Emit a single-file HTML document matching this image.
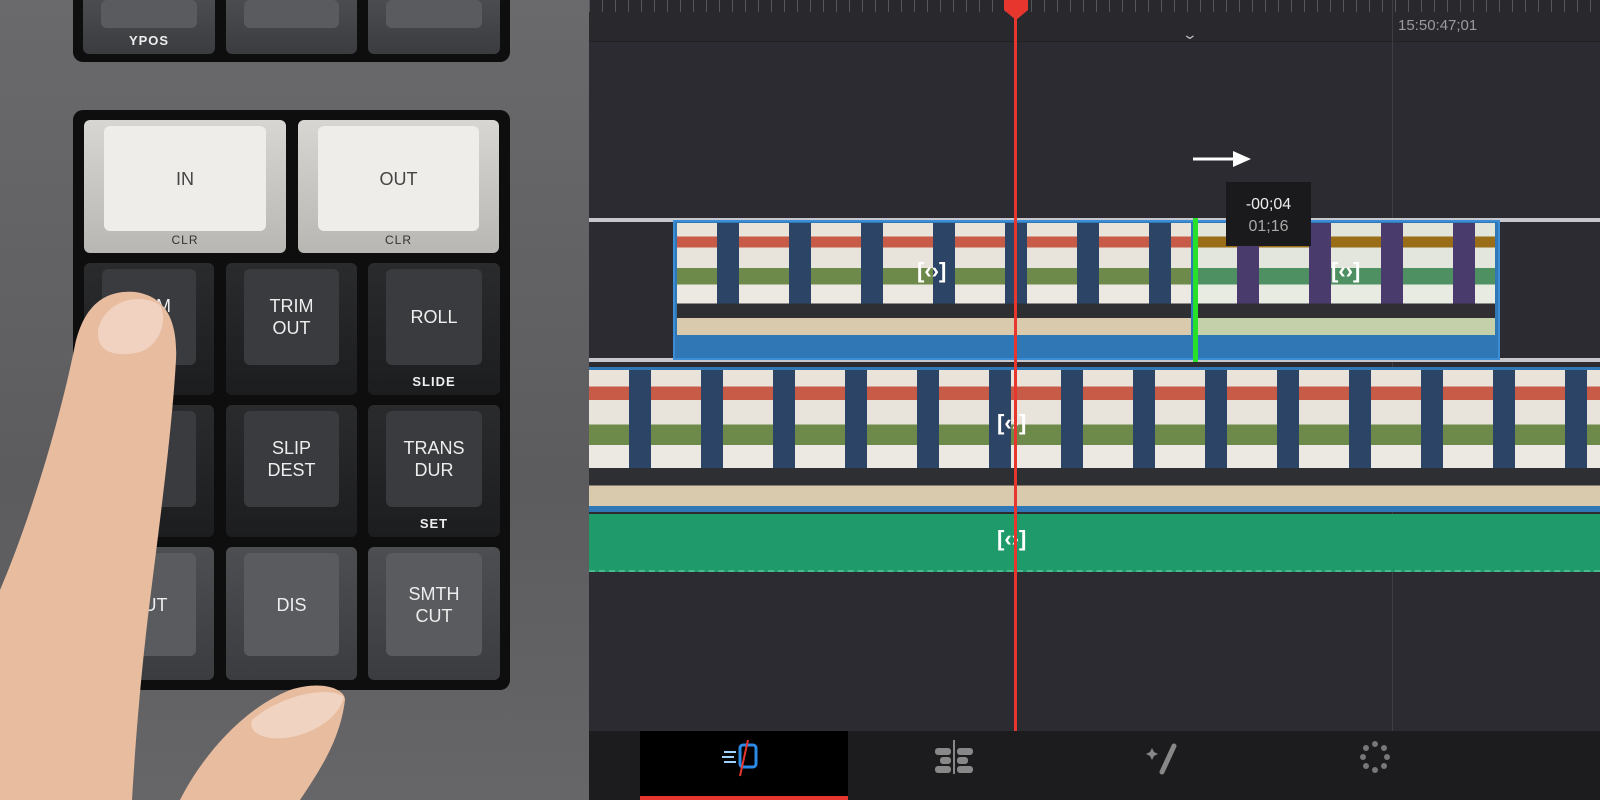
<!DOCTYPE html>
<html><head><meta charset="utf-8"><style>
*{margin:0;padding:0;box-sizing:border-box}
body{width:1600px;height:800px;overflow:hidden;background:#2c2c32;position:relative;font-family:"Liberation Sans",sans-serif}
.abs{position:absolute}
#left{left:0;top:0;width:589px;height:800px;background:linear-gradient(180deg,#6a6a6c,#5c5c5e 60%,#666668)}
.well{position:absolute;background:#0e0e0f;border-radius:10px}
.key{position:absolute;border-radius:6px;background:linear-gradient(180deg,#2a2b2d,#1c1d1f);}
.key .top{position:absolute;left:18px;right:18px;top:6px;bottom:30px;border-radius:6px;background:#3a3b3e;color:#eee;font-size:18px;text-align:center;display:flex;align-items:center;justify-content:center;line-height:22px}
.key .sub{position:absolute;bottom:6px;width:100%;text-align:center;color:#eee;font-size:13px;font-weight:bold;letter-spacing:1px}
.gk{background:linear-gradient(180deg,#4c4e51,#3a3c3f)}
.gk .top{background:#595b5e}
.wk{background:linear-gradient(180deg,#d8d6d2,#b9b7b3)}
.wk .top{background:#efedea;color:#444;bottom:22px;left:20px;right:20px}
.wk .sub{color:#333;font-weight:normal;font-size:12px}
#tl{left:589px;top:0;width:1011px;height:731px;background:#2b2b31}
.thumb{position:absolute;background:
 linear-gradient(180deg,transparent 0 72%,#2e2f33 72% 85%,#d9c9ad 85%),
 repeating-linear-gradient(90deg,transparent 0 40px,#2c4466 40px 62px,transparent 62px 72px),
 linear-gradient(180deg,#e9e3da 0 12%,#c85a48 12% 22%,#e8e4dc 22% 40%,#6d8a4a 40% 55%,#ece9e2 55%);}
</style></head><body>
<div id="left" class="abs">
 <div class="well" style="left:73px;top:-10px;width:437px;height:72px"></div>
 <div class="key gk" style="left:83px;top:-6px;width:132px;height:60px"><div class="top" style="bottom:26px"></div><div class="sub" style="font-weight:bold">YPOS</div></div>
 <div class="key gk" style="left:226px;top:-6px;width:131px;height:60px"><div class="top" style="bottom:26px"></div></div>
 <div class="key gk" style="left:368px;top:-6px;width:132px;height:60px"><div class="top" style="bottom:26px"></div></div>
 <div class="well" style="left:73px;top:110px;width:437px;height:580px"></div>
 <div class="key wk" style="left:84px;top:120px;width:202px;height:133px"><div class="top">IN</div><div class="sub">CLR</div></div>
 <div class="key wk" style="left:298px;top:120px;width:201px;height:133px"><div class="top">OUT</div><div class="sub">CLR</div></div>
 <div class="key" style="left:84px;top:263px;width:130px;height:132px"><div class="top">TRIM<br>IN</div></div>
 <div class="key" style="left:226px;top:263px;width:131px;height:132px"><div class="top">TRIM<br>OUT</div></div>
 <div class="key" style="left:368px;top:263px;width:132px;height:132px"><div class="top">ROLL</div><div class="sub">SLIDE</div></div>
 <div class="key" style="left:84px;top:405px;width:130px;height:132px"><div class="top"></div></div>
 <div class="key" style="left:226px;top:405px;width:131px;height:132px"><div class="top">SLIP<br>DEST</div></div>
 <div class="key" style="left:368px;top:405px;width:132px;height:132px"><div class="top">TRANS<br>DUR</div><div class="sub">SET</div></div>
 <div class="key gk" style="left:84px;top:547px;width:130px;height:133px"><div class="top" style="bottom:24px">CUT</div></div>
 <div class="key gk" style="left:226px;top:547px;width:131px;height:133px"><div class="top" style="bottom:24px">DIS</div></div>
 <div class="key gk" style="left:368px;top:547px;width:132px;height:133px"><div class="top" style="bottom:24px">SMTH<br>CUT</div></div>
 <svg class="abs" style="left:0;top:0" width="589" height="800">
  <path d="M0,590 C30,520 60,420 75,345 C85,300 110,290 135,292 C165,296 178,320 176,360 C172,430 160,520 150,600 C140,680 135,750 132,800 L0,800 Z" fill="#e8bc9f"/>
  <path d="M98,330 C105,300 140,292 160,305 C168,320 160,345 140,352 C115,358 96,352 98,330Z" fill="#f1d2c0"/>
  <path d="M180,800 C200,760 240,710 290,690 C320,680 345,688 345,700 C340,740 320,770 300,800 Z" fill="#e8bc9f"/>
  <path d="M252,720 C280,695 330,685 344,697 C338,720 310,735 285,738 C262,740 248,732 252,720Z" fill="#f0d3c0"/>
 </svg>
</div>
<div id="tl" class="abs">
 <div class="abs" style="left:0;top:0;width:1011px;height:42px;background:#28282d;border-bottom:1px solid #222;background-image:repeating-linear-gradient(90deg,#55555c 0 1px,transparent 1px 13px);background-size:100% 12px;background-repeat:no-repeat"></div>
 <div class="abs" style="left:803px;top:0;width:1px;height:731px;background:#3e3e44"></div>
 <div class="abs" style="left:809px;top:17px;color:#9a9aa0;font-size:15px">15:50:47;01</div>
 <div class="abs" style="left:595px;top:26px;color:#bbb;font-size:14px;transform:scaleX(1.4)">&#8964;</div>
 <div class="abs" style="left:0;top:218px;width:1011px;height:4px;background:#c8c8cc"></div>
 <div class="abs" style="left:0;top:358px;width:1011px;height:4px;background:#c8c8cc"></div>
 <div class="abs" style="left:84px;top:220px;width:827px;height:140px;background:#2f77b5;border:2px solid #3b8ed6"></div>
 <div class="thumb" style="left:88px;top:223px;width:514px;height:112px"></div>
 <div class="thumb" style="left:608px;top:223px;width:298px;height:112px;filter:hue-rotate(40deg)"></div>
 <div class="abs" style="left:604px;top:218px;width:5px;height:144px;background:#27e02a"></div>
 <div class="abs" style="left:0;top:367px;width:1011px;height:145px;background:#2f77b5"></div>
 <div class="thumb" style="left:0;top:370px;width:1011px;height:136px"></div>
 <div class="abs" style="left:0;top:514px;width:1011px;height:58px;background:#1f9a6a;border-bottom:2px dashed #4ab88a"></div>
 <div class="abs" style="left:637px;top:182px;width:85px;height:64px;background:#1a1a1c;color:#eee;font-size:16px;text-align:center;padding-top:12px;line-height:22px">-00;04<br><span style="color:#aaa">01;16</span></div>
 <svg class="abs" style="left:600px;top:148px" width="70" height="24"><path d="M4,11h42" stroke="#fff" stroke-width="3"/><path d="M44,3l18,8-18,8z" fill="#fff"/></svg>
 <div class="abs" style="left:328px;top:258px;color:#fff;font-size:22px;font-weight:bold">[‹›]</div>
 <div class="abs" style="left:742px;top:258px;color:#fff;font-size:22px;font-weight:bold">[‹›]</div>
 <div class="abs" style="left:408px;top:410px;color:#fff;font-size:22px;font-weight:bold">[‹›]</div>
 <div class="abs" style="left:408px;top:526px;color:#fff;font-size:22px;font-weight:bold">[‹›]</div>
 <div class="abs" style="left:425px;top:0;width:3px;height:731px;background:#e6362e"></div>
 <svg class="abs" style="left:414px;top:0" width="26" height="22"><path d="M1,0h24v10l-12,10-12-10z" fill="#e6362e"/></svg>
</div>
<div class="abs" style="left:589px;top:731px;width:1011px;height:69px;background:#1c1c1e"></div>
<div class="abs" style="left:640px;top:731px;width:208px;height:69px;background:#000;border-bottom:4px solid #e6362e"></div>
<svg class="abs" style="left:718px;top:740px" width="50" height="40"><rect x="22" y="5" width="16" height="22" rx="3" fill="none" stroke="#2a8ce6" stroke-width="3"/><path d="M6,12h12M4,17h12M6,22h12" stroke="#9fd0ff" stroke-width="2"/><path d="M30,0L22,36" stroke="#e6362e" stroke-width="2"/></svg>
<svg class="abs" style="left:932px;top:740px" width="44" height="36"><path d="M22,0v34" stroke="#888" stroke-width="2"/><rect x="3" y="8" width="16" height="7" rx="3" fill="#888"/><rect x="25" y="8" width="16" height="7" rx="3" fill="#888"/><rect x="8" y="17" width="11" height="7" rx="3" fill="#888"/><rect x="25" y="17" width="11" height="7" rx="3" fill="#888"/><rect x="3" y="26" width="16" height="7" rx="3" fill="#888"/><rect x="25" y="26" width="16" height="7" rx="3" fill="#888"/></svg>
<svg class="abs" style="left:1146px;top:738px" width="40" height="40"><path d="M28,8L16,34" stroke="#888" stroke-width="5" stroke-linecap="round"/><path d="M6,10l2,4 4,2-4,2-2,4-2-4-4-2 4-2z" fill="#888"/></svg>
<svg class="abs" style="left:1358px;top:740px" width="34" height="34"><g fill="#777"><circle cx="17" cy="4" r="3"/><circle cx="26" cy="8" r="3"/><circle cx="29" cy="17" r="3"/><circle cx="26" cy="26" r="3"/><circle cx="17" cy="30" r="3"/><circle cx="8" cy="26" r="3"/><circle cx="5" cy="17" r="3"/><circle cx="8" cy="8" r="3"/></g></svg>
</body></html>
